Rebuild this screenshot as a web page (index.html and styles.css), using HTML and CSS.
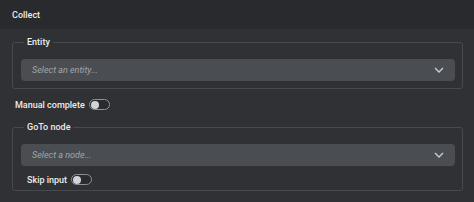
FILE: index.html
```html
<!DOCTYPE html>
<html>

<head>
  <link rel="stylesheet" href="styles.css">
</head>

<body>
  <div class="header">Collect</div>

  <div class="content">
    <fieldset class="group">
      <legend>Entity</legend>
      <div class="select">
        <span class="placeholder">Select an entity...</span>
        <svg class="chevron" width="10" height="6" viewBox="0 0 10 6">
          <polyline points="1,1 5,5 9,1" fill="none" stroke="#cfd0d2" stroke-width="1.3" />
        </svg>
      </div>
    </fieldset>

    <div class="switch-row top-row">
      <span class="label">Manual complete</span>
      <span class="toggle"><span class="knob"></span></span>
    </div>

    <fieldset class="group second">
      <legend>GoTo node</legend>
      <div class="select">
        <span class="placeholder">Select a node...</span>
        <svg class="chevron" width="10" height="6" viewBox="0 0 10 6">
          <polyline points="1,1 5,5 9,1" fill="none" stroke="#cfd0d2" stroke-width="1.3" />
        </svg>
      </div>
      <div class="switch-row inner-row">
        <span class="label">Skip input</span>
        <span class="toggle"><span class="knob"></span></span>
      </div>
    </fieldset>
  </div>
</body>

</html>
```

FILE: styles.css
```css
/* Base */
body {
  margin: 0;
  background-color: #303134;
  color: #ececec;
  font-family: Roboto, "Liberation Sans", sans-serif;
  font-size: 9px;
}

/* Panel title */
.header {
  height: 29px;
  display: flex;
  align-items: center;
  padding-left: 12px;
  background-color: #292a2d;
  font-weight: 500;
}

.content {
  padding: 7px 11px 0 12px;
}

/* Grouped fields */
.group {
  margin: 0;
  padding: 11px 7px 7px 8px;
  border: 1px solid #47494d;
  border-radius: 3px;
}

.group legend {
  margin-left: 3px;
  padding: 0 3px;
  line-height: 12px;
  font-weight: 500;
}

.group.second {
  margin-top: 11px;
  padding-bottom: 5px;
}

/* Dropdown */
.select {
  height: 22px;
  display: flex;
  align-items: center;
  justify-content: space-between;
  padding: 0 11px;
  background-color: #4a4d52;
  border-radius: 4px;
}

.placeholder {
  color: #a3a6ab;
  font-style: italic;
}

/* Switches */
.switch-row {
  height: 11px;
  display: flex;
  align-items: center;
  gap: 4px;
}

.switch-row .label {
  font-weight: 500;
}

.top-row {
  margin-top: 10px;
  padding-left: 3px;
}

.inner-row {
  margin-top: 8px;
  padding-left: 6px;
}

.toggle {
  width: 17px;
  height: 9px;
  display: flex;
  align-items: center;
  padding: 0 1px;
  border: 1px solid #8d8f93;
  border-radius: 6px;
  background-color: #2a2b2e;
}

.knob {
  width: 8px;
  height: 8px;
  border-radius: 50%;
  background-color: #d2d3d5;
}
```
